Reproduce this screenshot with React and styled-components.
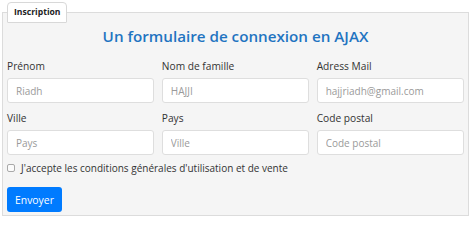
import React from "react";
import styled, { createGlobalStyle } from "styled-components";

const Global = createGlobalStyle`
  html, body { margin: 0; padding: 0; background: #ffffff; }
  body { font-family: "Open Sans", "Liberation Sans", sans-serif; color: #333; }
  * { box-sizing: border-box; }
`;

const Panel = styled.fieldset`
  margin: 2px 5px 0 2px;
  padding: 0 4px 3px 4px;
  border: 1px solid #dcdcdc;
  background: #f5f5f5;
  min-width: 0;
`;

const Legend = styled.legend`
  margin: 0;
  padding: 0 6px;
  height: 21px;
  line-height: 19px;
  border: 1px solid #d8d8d8;
  border-radius: 4px 4px 1px 1px;
  background: #ffffff;
  font-size: 8.6px;
  font-weight: 700;
  color: #222;
`;

const Title = styled.h2`
  margin: 1px 0 10px;
  line-height: 24px;
  text-align: center;
  font-size: 15.2px;
  font-weight: 600;
  color: #1f74c1;
`;

const Grid = styled.div`
  display: grid;
  grid-template-columns: repeat(3, 1fr);
  column-gap: 7.5px;
  row-gap: 7px;
`;

const Field = styled.div`
  display: flex;
  flex-direction: column;
  gap: 4px;
`;

const Label = styled.label`
  font-size: 10.2px;
  line-height: 16px;
  color: #333;
`;

const Input = styled.input`
  height: 25px;
  width: 100%;
  padding: 0 8px;
  border: 1px solid #dedede;
  border-radius: 3px;
  background: #fff;
  font-family: inherit;
  font-size: 10px;
  color: #333;
  &::placeholder { color: #9a9a9a; }
`;

const CheckRow = styled.label`
  display: flex;
  align-items: center;
  gap: 6px;
  margin-top: 5px;
  font-size: 10px;
  line-height: 16px;
  color: #333;
`;

const Check = styled.input`
  appearance: none;
  margin: 0;
  width: 8px;
  height: 8px;
  border: 1px solid #a9a9a9;
  border-radius: 2px;
  background: #fbfbfb;
`;

const Button = styled.button`
  margin-top: 11px;
  height: 25px;
  padding: 0 8px;
  border: none;
  border-radius: 3px;
  background: #007bff;
  color: #fff;
  font-family: inherit;
  font-size: 10.4px;
  cursor: pointer;
`;

const fields = [
  { label: "Prénom", ph: "Riadh" },
  { label: "Nom de famille", ph: "HAJJI" },
  { label: "Adress Mail", ph: "hajjriadh@gmail.com" },
  { label: "Ville", ph: "Pays" },
  { label: "Pays", ph: "Ville" },
  { label: "Code postal", ph: "Code postal" },
];

export default function App() {
  return (
    <>
      <Global />
      <form onSubmit={(e) => e.preventDefault()}>
        <Panel>
          <Legend>Inscription</Legend>
          <Title>Un formulaire de connexion en AJAX</Title>
          <Grid>
            {fields.map((f) => (
              <Field key={f.label}>
                <Label>{f.label}</Label>
                <Input placeholder={f.ph} />
              </Field>
            ))}
          </Grid>
          <CheckRow>
            <Check type="checkbox" />
            J'accepte les conditions générales d'utilisation et de vente
          </CheckRow>
          <Button type="submit">Envoyer</Button>
        </Panel>
      </form>
    </>
  );
}
